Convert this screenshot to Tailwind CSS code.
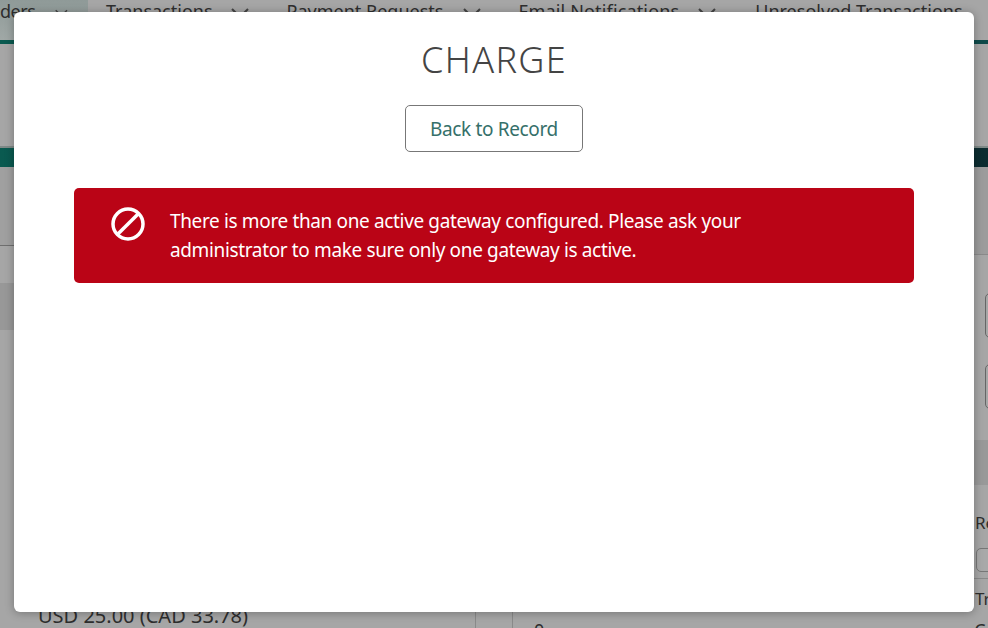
<!DOCTYPE html>
<html lang="en">
<head>
  <meta charset="UTF-8" />
  <meta name="viewport" content="width=device-width, initial-scale=1.0" />
  <title>Charge</title>
  <script src="https://cdn.jsdelivr.net/npm/@tailwindcss/browser@4"></script>
</head>
<body class="relative h-[628px] w-[988px] overflow-hidden bg-[#a6a6a6] font-['Noto_Sans',sans-serif] text-[#333]">

<!-- Page behind the modal -->
<div class="h-full w-full">
  <!-- Nav tabs -->
  <nav class="flex h-[40px] items-start overflow-hidden whitespace-nowrap text-[18px] leading-[22px] text-[#2e2e2e]">
    <div class="flex h-full w-[88px] shrink-0 justify-end gap-[20px] bg-gradient-to-b from-[#8f9a98] to-[#a0a8a6] pr-[20px]">
      <span class="tracking-[-0.5px]">ders</span>
      <svg class="mt-[8px] h-[10px] w-[18px]" viewBox="0 0 18 10" fill="none" stroke="#444" stroke-width="2"><path d="M1 1l8 8 8-8" /></svg>
    </div>
    <div class="ml-[18px] flex gap-[18px]">
      <span>Transactions</span>
      <svg class="mt-[8px] h-[10px] w-[18px]" viewBox="0 0 18 10" fill="none" stroke="#444" stroke-width="2"><path d="M1 1l8 8 8-8" /></svg>
    </div>
    <div class="ml-[38px] flex gap-[20px]">
      <span>Payment Requests</span>
      <svg class="mt-[8px] h-[10px] w-[18px]" viewBox="0 0 18 10" fill="none" stroke="#444" stroke-width="2"><path d="M1 1l8 8 8-8" /></svg>
    </div>
    <div class="ml-[37px] flex gap-[19px]">
      <span class="tracking-[0.15px]">Email Notifications</span>
      <svg class="mt-[8px] h-[10px] w-[18px]" viewBox="0 0 18 10" fill="none" stroke="#444" stroke-width="2"><path d="M1 1l8 8 8-8" /></svg>
    </div>
    <div class="ml-[39px]"><span>Unresolved Transactions</span></div>
  </nav>
  <div class="h-[4px] bg-gradient-to-r from-[#0a5a50] to-[#0f4a4a]"></div>
  <div class="h-[102px]"></div>
  <div class="h-[2px] bg-[#7f8a88]"></div>
  <div class="h-[19px] bg-gradient-to-r from-[#0a5a50] to-[#0c2c30]"></div>

  <div class="flex h-[461px]">
    <!-- Left column -->
    <div class="flex w-[476px] shrink-0 flex-col border-r border-[#8a8a8a]">
      <div class="h-[79px] shrink-0 border-b border-[#6f6f6f] bg-[#a0a0a0]"></div>
      <div class="mt-[37px] h-[47px] bg-[#989898]"></div>
      <div class="mt-auto pl-[38px] text-[20px] leading-[24px] text-[#2e2e2e]">USD 25.00 (CAD 33.78)</div>
    </div>
    <!-- Right column -->
    <div class="ml-[36px] flex flex-1 flex-col overflow-hidden border-l border-[#8a8a8a]">
      <div class="h-[88px] shrink-0 border-b border-[#8a8a8a] bg-[#9c9c9c]"></div>
      <div class="ml-[472px] mt-[38px] h-[45px] w-[20px] shrink-0 rounded-[5px] border border-[#666]"></div>
      <div class="ml-[472px] mt-[26px] h-[45px] w-[20px] shrink-0 rounded-[5px] border border-[#666]"></div>
      <div class="mt-[31px] h-[45px] shrink-0 bg-[#999]"></div>
      <div class="ml-[462px] mt-[28px] whitespace-nowrap text-[17px] leading-[20px] text-[#2e2e2e]">Refund</div>
      <div class="ml-[463px] mt-[15px] h-[24px] w-[30px] shrink-0 rounded-[5px] border border-[#777] bg-[#a9a9a9]"></div>
      <div class="mt-[6px] shrink-0 border-t border-[#8a8a8a]"></div>
      <div class="ml-[462px] mt-[10px] whitespace-nowrap text-[17px] leading-[20px] text-[#2e2e2e]">Transaction</div>
      <div class="mt-[9px] flex text-[18px] leading-[24px] text-[#2e2e2e]">
        <span class="ml-[21px]">0</span>
        <span class="ml-[430px]">CAD</span>
      </div>
    </div>
  </div>
</div>

<!-- Modal -->
<div class="absolute left-[14px] top-[12px] flex h-[600px] w-[960px] flex-col items-center rounded-[6px] bg-white shadow-[0_1px_10px_rgba(0,0,0,0.3)]">
  <h1 class="mt-[26px] text-[36px] font-light leading-[44px] tracking-[1.3px] text-[#444]">CHARGE</h1>
  <a class="mt-[23px] flex h-[47px] w-[178px] items-center justify-center rounded-[5px] border border-[#777] pt-[2px] text-[19px] tracking-[-0.35px] text-[#35706a]">Back to Record</a>
  <div class="mt-[36px] flex h-[95px] w-[840px] items-start rounded-[5px] bg-[#ba0416] pl-[36px] pt-[18px] text-white">
    <svg class="h-[36px] w-[36px] shrink-0" viewBox="0 0 36 36" fill="none" stroke="currentColor" stroke-width="3.5">
      <circle cx="18" cy="18" r="15" />
      <path d="M7.4 28.6 28.6 7.4" />
    </svg>
    <p class="ml-[24px] mt-[1px] text-[19px] leading-[29px] tracking-[-0.36px]">There is more than one active gateway configured. Please ask your<br />administrator to make sure only one gateway is active.</p>
  </div>
</div>

</body>
</html>
